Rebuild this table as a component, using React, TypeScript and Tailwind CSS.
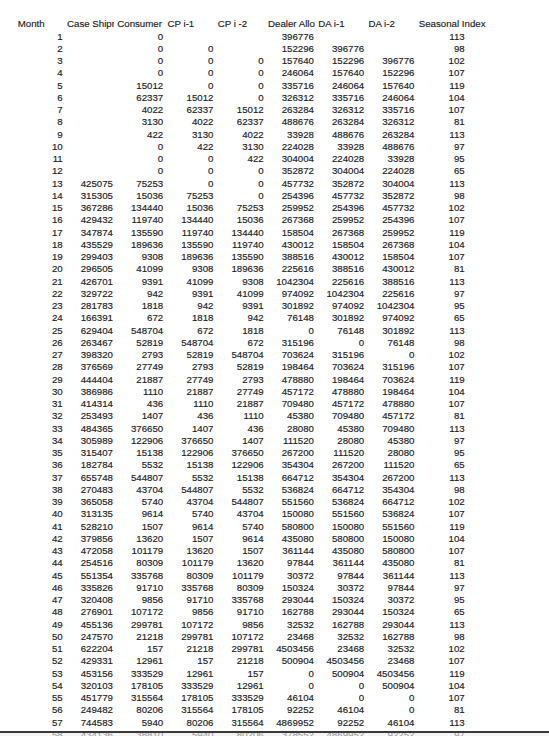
import React from "react";

// monthly series, row 1..58 (58 is mostly under the bottom bar)
const consumer = [
  0, 0, 0, 0, 15012, 62337, 4022, 3130, 422, 0, 0, 0,
  75253, 15036, 134440, 119740, 135590, 189636, 9308, 41099, 9391, 942, 1818, 672,
  548704, 52819, 2793, 27749, 21887, 1110, 436, 1407, 376650, 122906, 15138, 5532,
  544807, 43704, 5740, 9614, 1507, 13620, 101179, 80309, 335768, 91710, 9856, 107172,
  299781, 21218, 157, 12961, 333529, 178105, 315564, 80206, 5940, 38810,
];

const caseShipments: (number | null)[] = [
  ...Array(12).fill(null),
  425075, 315305, 367286, 429432, 347874, 435529,
  299403, 296505, 426701, 329722, 281783, 166391, 629404, 263467, 398320, 376569,
  444404, 386986, 414314, 253493, 484365, 305989, 315407, 182784, 655748,
  270483, 365058, 313135, 528210, 379856, 472058, 254516, 551354, 335826, 320408,
  276901, 455136, 247570, 622204, 429331, 453156, 320103, 451779, 249482, 744583,
  434136,
];

const dealer = [
  396776, 152296, 157640, 246064, 335716, 326312, 263284, 488676, 33928, 224028, 304004, 352872,
  457732, 254396, 259952, 267368, 158504, 430012, 388516, 225616, 1042304, 974092, 301892, 76148,
  0, 315196, 703624, 198464, 478880, 457172, 709480, 45380, 28080, 111520, 267200, 354304,
  664712, 536824, 551560, 150080, 580800, 435080, 361144, 97844, 30372, 150324, 293044, 162788,
  32532, 23468, 4503456, 500904, 0, 0, 46104, 92252, 4869952, 378552,
];

const seasonal = [113, 98, 102, 107, 119, 104, 107, 81, 113, 97, 95, 65];

const headers = [
  "Month",
  "Case Shipments",
  "Consumer Purchases",
  "CP i-1",
  "CP i -2",
  "Dealer Allotments",
  "DA i-1",
  "DA i-2",
  "Seasonal Index",
];

const rows = consumer.map((c, i) => [
  i + 1,
  caseShipments[i],
  c,
  i >= 1 ? consumer[i - 1] : null,
  i >= 2 ? consumer[i - 2] : null,
  dealer[i],
  i >= 1 ? dealer[i - 1] : null,
  i >= 2 ? dealer[i - 2] : null,
  seasonal[i % 12],
]);

export default function App() {
  return (
    <div className="min-h-[736px] bg-white pl-[13.75px] pt-[18.3px] font-['Liberation_Sans',Arial,sans-serif] text-[9.7px] text-[#1a1a1a] [-webkit-text-stroke:0.15px_#1a1a1a]">
      <div className="flex h-[12.4px] leading-[12.4px]">
        {headers.map((h, i) => (
          <div
            key={h}
            className={
              i === 0
                ? "w-[50.25px] shrink-0 pl-[4px] whitespace-nowrap"
                : i === headers.length - 1
                  ? "w-[50.25px] shrink-0 pl-[3px] whitespace-nowrap"
                  : "w-[50.25px] shrink-0 overflow-hidden pl-[3px] whitespace-nowrap"
            }
          >
            {h}
          </div>
        ))}
      </div>

      {rows.map((r) => (
        <div key={r[0]} className="flex h-[12.26px] leading-[12.26px]">
          {r.map((v, j) => (
            <div key={j} className="w-[50.25px] shrink-0 pr-[1.3px] text-right whitespace-nowrap">
              {v ?? ""}
            </div>
          ))}
        </div>
      ))}

      {/* bottom edge of the window */}
      <div className="fixed bottom-0 left-0 right-0 h-[5px] border-t-2 border-[#3a3a3a] bg-[#ececec]/60" />
    </div>
  );
}
